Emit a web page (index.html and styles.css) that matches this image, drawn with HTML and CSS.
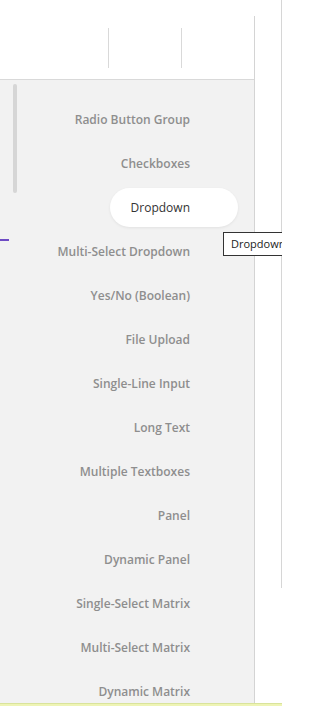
FILE: index.html
```html
<!DOCTYPE html>
<html>
<head>
<meta charset="utf-8">
<link rel="stylesheet" href="styles.css">
</head>
<body>
<div class="app">
  <div class="main">
    <div class="panel">
      <div class="header">
        <div class="hcell"></div>
        <div class="hcell"></div>
      </div>
      <div class="list">
        <div class="item"><span class="label">Radio Button Group</span></div>
        <div class="item"><span class="label">Checkboxes</span></div>
        <div class="item"><span class="label active">Dropdown</span></div>
        <div class="item"><span class="label">Multi-Select Dropdown</span></div>
        <div class="item"><span class="label">Yes/No (Boolean)</span></div>
        <div class="item"><span class="label">File Upload</span></div>
        <div class="item"><span class="label">Single-Line Input</span></div>
        <div class="item"><span class="label">Long Text</span></div>
        <div class="item"><span class="label">Multiple Textboxes</span></div>
        <div class="item"><span class="label">Panel</span></div>
        <div class="item"><span class="label">Dynamic Panel</span></div>
        <div class="item"><span class="label">Single-Select Matrix</span></div>
        <div class="item"><span class="label">Multi-Select Matrix</span></div>
        <div class="item"><span class="label">Dynamic Matrix</span></div>
      </div>
    </div>
    <div class="rail"></div>
  </div>
  <div class="strip"></div>
  <div class="thumb"></div>
  <div class="marker"></div>
  <div class="edge"></div>
  <div class="tooltip">Dropdown</div>
</div>
</body>
</html>
```
FILE: styles.css
```css
html, body {
  margin: 0;
  padding: 0;
}
body {
  width: 282px;
  height: 706px;
  overflow: hidden;
  background: #fff;
  font-family: "Open Sans", "Liberation Sans", sans-serif;
}
.app {
  position: relative;
  width: 282px;
  height: 706px;
  display: flex;
  flex-direction: column;
  overflow: hidden;
}
.main {
  flex: 1;
  display: flex;
  min-height: 0;
}
.panel {
  width: 254px;
  display: flex;
  flex-direction: column;
  min-height: 0;
}
.header {
  border-bottom: 1px solid #d9d9d9;
  background: #fff;
  display: flex;
  padding-left: 108px;
  padding-top: 28px;
  box-sizing: border-box;
  height: 80px;
}
.hcell {
  width: 72px;
  height: 40px;
  border-left: 1px solid #d9d9d9;
}
.list {
  flex: 1;
  background: #f2f2f2;
  padding: 17px 64px 0 0;
  overflow: hidden;
}
.item {
  height: 44px;
  display: flex;
  align-items: center;
  justify-content: flex-end;
}
.label {
  font-size: 12px;
  font-weight: 600;
  color: #8e8e8e;
  white-space: nowrap;
}
.label.active {
  display: flex;
  align-items: center;
  height: 39px;
  padding: 0 48px 0 21px;
  margin-right: -48px;
  background: #fff;
  border-radius: 20px;
  color: #333;
  font-weight: 400;
  box-shadow: 0 1px 3px rgba(0, 0, 0, 0.07);
}
.rail {
  flex: 1;
  margin-top: 16px;
  border-left: 1px solid #d4d4d4;
  background: #fff;
}
.strip {
  height: 3px;
  background: #eef4b4;
  border-top: 1px solid #d9e39c;
  box-sizing: border-box;
}
.thumb {
  position: absolute;
  left: 13px;
  top: 84px;
  width: 4px;
  height: 109px;
  border-radius: 2px;
  background: #d6d6d6;
}
.marker {
  position: absolute;
  left: 0;
  top: 239px;
  width: 9px;
  height: 2px;
  background: #6e4cc4;
}
.edge {
  position: absolute;
  left: 281px;
  top: 0;
  width: 1px;
  height: 588px;
  background: #d6d6d6;
}
.tooltip {
  position: absolute;
  left: 223px;
  top: 232px;
  height: 24px;
  padding: 0 6px 0 7px;
  border: 1px solid #333;
  background: #fff;
  box-sizing: border-box;
  font-family: "Open Sans", "Liberation Sans", sans-serif;
  font-size: 11px;
  line-height: 22px;
  color: #222;
  white-space: nowrap;
}
```
